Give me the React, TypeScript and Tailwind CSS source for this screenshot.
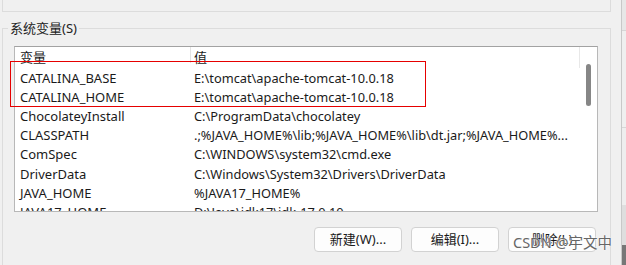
import React from "react";

const rows: [string, string][] = [
  ["CATALINA_BASE", "E:\\tomcat\\apache-tomcat-10.0.18"],
  ["CATALINA_HOME", "E:\\tomcat\\apache-tomcat-10.0.18"],
  ["ChocolateyInstall", "C:\\ProgramData\\chocolatey"],
  ["CLASSPATH", ".;%JAVA_HOME%\\lib;%JAVA_HOME%\\lib\\dt.jar;%JAVA_HOME%..."],
  ["ComSpec", "C:\\WINDOWS\\system32\\cmd.exe"],
  ["DriverData", "C:\\Windows\\System32\\Drivers\\DriverData"],
  ["JAVA_HOME", "%JAVA17_HOME%"],
  ["JAVA17_HOME", "D:\\Java\\jdk17\\jdk-17.0.10"],
];

const font = { fontFamily: '"Noto Sans", "Noto Sans CJK SC", sans-serif' };

export default function App() {
  return (
    <div
      className="relative w-[626px] h-[265px] bg-[#f0f0f0] overflow-hidden flex text-[13px] text-[#1a1a1a]"
      style={font}
    >
      <div className="w-[621px] flex flex-col">
        <div className="ml-[2px] w-[609px] h-[12px] border-x border-b border-[#dcdcdc] shrink-0" />
        <div className="relative mt-[16px] ml-[2px] w-[609px] flex-1 border-x border-t border-[#dcdcdc] flex flex-col">
          <div className="absolute top-[-10px] left-[5px] px-[2px] bg-[#f0f0f0] leading-[18px] text-[#222]">
            系统变量(S)
          </div>
          <div className="mt-[17px] ml-[11px] w-[584px] h-[166px] shrink-0 border border-[#b8b8b8] border-t-[#a2a2a2] bg-white flex overflow-hidden">
            <div className="w-[564px] flex flex-col">
              <div className="h-[21.5px] shrink-0 flex items-start">
                <div className="w-[175px] pl-[5px] h-[21px] leading-[21px]">变量</div>
                <div className="w-px h-[16px] bg-[#e4e4e4]" />
                <div className="flex-1 pl-[3px] h-[21px] leading-[21px]">值</div>
              </div>
              {rows.map(([k, v]) => (
                <div key={k} className="h-[19.2px] shrink-0 flex items-center leading-[19px]">
                  <div className="w-[175px] pl-[5px] whitespace-nowrap">{k}</div>
                  <div className="flex-1 pl-[4px] whitespace-nowrap overflow-hidden text-[12.8px]">{v}</div>
                </div>
              ))}
            </div>
            <div className="flex-1 flex">
              <div className="w-px h-[21px] bg-[#e8e8e8]" />
              <div className="flex-1">
                <div className="mt-[17px] ml-[6px] w-[5px] h-[42px] bg-[#868686] rounded-full" />
              </div>
            </div>
          </div>
          <div className="mt-[15px] ml-[311px] flex gap-[9px]">
            {["新建(W)...", "编辑(I)...", "删除(L)"].map((t) => (
              <div
                key={t}
                className="w-[88px] h-[25px] border border-[#d2d2d2] bg-[#fdfdfd] rounded-[4px] flex items-center justify-center text-[#1a1a1a]"
              >
                {t}
              </div>
            ))}
          </div>
        </div>
      </div>
      <div className="w-[5px] border-l border-[#c8c8c8] flex flex-col">
        <div className="h-[31px] bg-[#e7e7e7] border-b border-[#d6d6d6]" />
        <div className="h-[97px] bg-[#efefef] border-b border-[#d6d6d6]" />
        <div className="h-[77px] bg-[#eeeeee]" />
        <div className="h-[40px] bg-[#dedede]" />
        <div className="flex-1 bg-[#777777]" />
      </div>

      <div className="absolute left-[10px] top-[61px] w-[416px] h-[46px] border border-[#e60000] pointer-events-none" />
      <div
        className="absolute left-[513px] top-[233px] text-[14.5px] leading-[18px] text-[#666666] whitespace-nowrap"
        style={{ textShadow: "0 0 2px #fff, 0 0 1px #fff" }}
      >
        CSDN @宇文中
      </div>
    </div>
  );
}
